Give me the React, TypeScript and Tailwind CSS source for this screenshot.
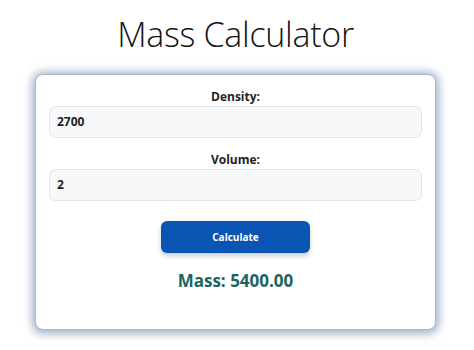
export default function App() {
  return (
    <div className="w-[474px] h-[350px] bg-white font-['Open_Sans',sans-serif] overflow-hidden">
      <h1 className="pt-[10px] text-center text-[34px] leading-[48px] font-light text-[#141414] tracking-[-0.3px] pr-[3px]">
        Mass Calculator
      </h1>
      <div className="mt-[16px] ml-[35px] w-[401px] h-[256px] rounded-[8px] bg-white border border-[#a9b9cc] shadow-[0_1px_8px_3px_rgba(100,130,168,0.6)] px-[13px] pt-[14px]">
        <Field label="Density:" value="2700" />
        <div className="h-[14px]" />
        <Field label="Volume:" value="2" />
        <div className="flex justify-center mt-[20px]">
          <button className="w-[149px] h-[32px] rounded-[6px] bg-[#0a55b3] text-white text-[10px] font-bold shadow-[0_3px_5px_rgba(0,0,0,0.2)]">
            Calculate
          </button>
        </div>
        <p className="mt-[16px] text-center text-[17px] font-bold text-[#1e6560] leading-[24px]">
          Mass: 5400.00
        </p>
      </div>
    </div>
  );
}

function Field({ label, value }: { label: string; value: string }) {
  return (
    <div className="flex flex-col">
      <label className="text-center text-[12px] font-bold text-[#222] leading-[16px] mb-[1px]">
        {label}
      </label>
      <div className="h-[32px] rounded-[7px] bg-[#f7f8fa] border border-[#e2e5e9] flex items-center px-[7px] text-[12px] font-bold text-[#222]">
        {value}
      </div>
    </div>
  );
}
